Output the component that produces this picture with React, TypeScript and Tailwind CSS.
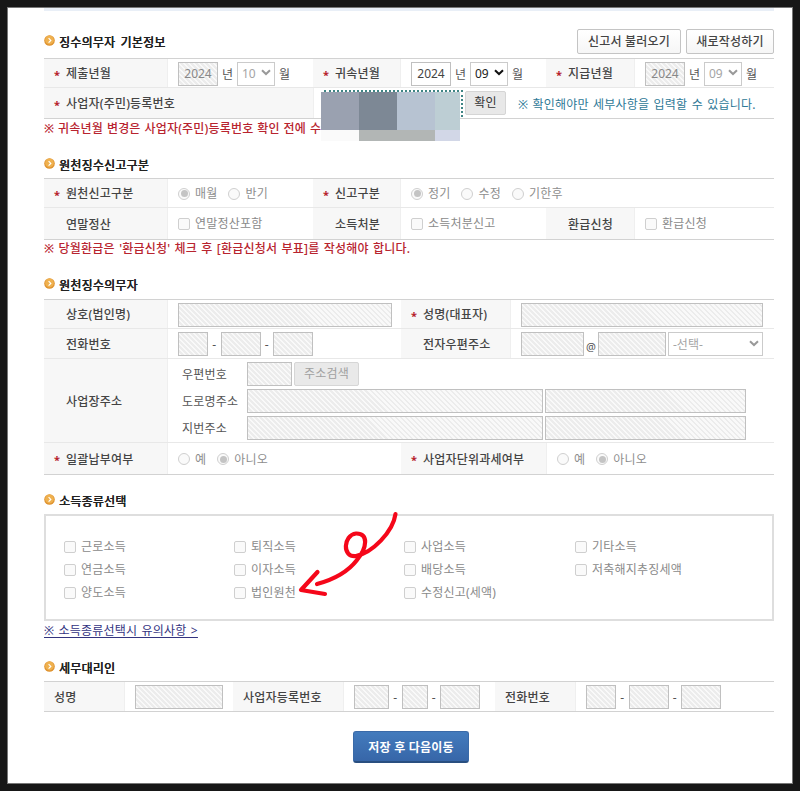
import type { ReactNode } from 'react'

interface CellProps {
  w: string
  children?: ReactNode
}

interface LabelProps extends CellProps {
  required?: boolean
  plain?: boolean
}

function Bullet() {
  return (
    <svg width="11" height="11" viewBox="0 0 11 11" className="mt-[-5px] shrink-0">
      <circle cx="5.5" cy="5.5" r="5.3" fill="#df9330" />
      <circle cx="5.5" cy="5" r="4.4" fill="#efb14f" />
      <path d="M4.6 3.2 L6.8 5.4 L4.6 7.6" fill="none" stroke="#fff" strokeWidth="1.2" />
    </svg>
  )
}

function Heading({ children }: { children: ReactNode }) {
  return (
    <h2 className="flex h-5 items-center gap-1 font-medium text-[#222]">
      <Bullet />
      <span className="[text-shadow:0.3px_0_0_#222]">{children}</span>
    </h2>
  )
}

function Table({ children }: { children: ReactNode }) {
  return <div className="border-t border-b border-[#d2d2d2] divide-y divide-[#e8e8e8]">{children}</div>
}

function Label({ w, required, plain, children }: LabelProps) {
  return (
    <div className={`flex shrink-0 items-center self-stretch border-r border-[#efefef] bg-[#f7f7f7] pl-[10px] pt-[2px] font-medium text-[#444] ${w}`}>
      {!plain && (
        <span className="w-3 shrink-0 text-[11px] font-bold leading-none text-[#b5202a]">{required ? '*' : ''}</span>
      )}
      {children}
    </div>
  )
}

function Cell({ w, children }: CellProps) {
  return <div className={`flex shrink-0 items-center pl-[10px] pt-px ${w}`}>{children}</div>
}

function Field({ w, value, enabled }: { w: string; value?: string; enabled?: boolean }) {
  const look = enabled
    ? 'bg-white text-[#444]'
    : 'bg-[#f8f8f8] bg-[repeating-linear-gradient(45deg,#f9f9f9_0_2px,#ececec_2px_3.54px)] text-[#888]'
  return (
    <span className={`flex h-6 shrink-0 items-center justify-center border border-[#c0c0c0] tracking-normal ${look} ${w}`}>
      {value}
    </span>
  )
}

function Select({ w, value, enabled }: { w: string; value: string; enabled?: boolean }) {
  return (
    <span
      className={`flex h-6 shrink-0 items-center justify-between border border-[#cbcbcb] bg-white pl-1 pr-[3px] tracking-normal ${enabled ? 'text-[#222]' : 'text-[#a5a5a5]'} ${w}`}
    >
      <span className="pt-px">{value}</span>
      <svg width="10" height="7" viewBox="0 0 10 7" className="mt-[-2px]">
        <path d="M1 1.2 L5 5 L9 1.2" fill="none" stroke={enabled ? '#111' : '#999'} strokeWidth="2" />
      </svg>
    </span>
  )
}

function YearMonth({ month, enabled = false }: { month: string; enabled?: boolean }) {
  return (
    <>
      <Field w="w-10" value="2024" enabled={enabled} />
      <span className="ml-[4px] w-[15px] pt-[2px] text-[#555]">년</span>
      <Select w="w-[38px]" value={month} enabled={enabled} />
      <span className="ml-[4px] pt-[2px] text-[#555]">월</span>
    </>
  )
}

function Radio({ checked, children }: { checked?: boolean; children: ReactNode }) {
  return (
    <span className="mr-[11px] flex items-center gap-[5px] text-[#8e8e8e]">
      <span className="flex size-3 items-center justify-center rounded-full border border-[#cfcfcf] bg-[#fafafa]">
        {checked && <span className="size-[7px] rounded-full bg-[#c4c4c4]" />}
      </span>
      <span className="pt-px">{children}</span>
    </span>
  )
}

function Check({ children }: { children: ReactNode }) {
  return (
    <span className="flex h-4 items-center gap-[5px] text-[#8a8a8a]">
      <span className="size-3 rounded-[2px] border border-[#cfcfcf] bg-[#fafafa]" />
      <span>{children}</span>
    </span>
  )
}

function Dash() {
  return <span className="w-[12.5px] shrink-0 pt-[2px] text-center tracking-normal text-[#555]">-</span>
}

function SmallButton({ w, children }: CellProps) {
  return (
    <button className={`h-[25px] rounded-[2px] border border-[#c4c4c4] bg-gradient-to-b from-white to-[#f6f6f6] pt-px font-medium text-[#444] ${w}`}>
      {children}
    </button>
  )
}

function AddressRow({ label, children }: { label: string; children: ReactNode }) {
  return (
    <div className="flex h-6 items-center gap-[2px]">
      <span className="w-[63px] pt-px">{label}</span>
      {children}
    </div>
  )
}

function Redaction() {
  return (
    <div className="absolute left-[7px] top-[2px] h-[50px] w-[142px]">
      <div className="absolute left-[3px] top-0 h-[27px] w-[139px] border-r-2 border-t-2 border-dotted border-[#3f8585]" />
      <div className="absolute left-0 top-[2px] grid grid-cols-[38px_38px_38px_25px] grid-rows-[38px_11px]">
        <div className="bg-[#9aa1b0]" />
        <div className="bg-[#7d8895]" />
        <div className="bg-[#b7c3d2]" />
        <div className="bg-[#bdced4]" />
        <div className="bg-[#fafafa]" />
        <div className="bg-[#b2b6b5]" />
        <div className="bg-[#b2b6b5]" />
        <div className="bg-[#d2d7e7]" />
      </div>
    </div>
  )
}

const incomeTypes = [
  '근로소득', '퇴직소득', '사업소득', '기타소득',
  '연금소득', '이자소득', '배당소득', '저축해지추징세액',
  '양도소득', '법인원천', '수정신고(세액)',
]

export default function App() {
  return (
    <div className="relative h-[791px] w-[800px] overflow-hidden bg-[#171717] p-[7px] font-['Noto_Sans','Noto_Sans_CJK_KR',sans-serif] text-[12px] leading-4 tracking-[0.2px] [word-spacing:1px] whitespace-nowrap">
      <main className="h-[777px] border border-[#777] bg-white pl-9 pr-[18px]">
        <div className="w-[730px]">
          <div className="h-[3px] bg-[#e9eff7]" />

          <div className="flex h-[47px] items-start justify-between pt-[18px]">
            <div className="pt-1 [word-spacing:2px]">
              <Heading>징수의무자 기본정보</Heading>
            </div>
            <div className="flex gap-[5px]">
              <SmallButton w="w-[104px]">신고서 불러오기</SmallButton>
              <SmallButton w="w-[88px]">새로작성하기</SmallButton>
            </div>
          </div>
          <Table>
            <div className="flex h-[29px]">
              <Label w="w-[124px]" required>제출년월</Label>
              <Cell w="w-[145px]"><YearMonth month="10" /></Cell>
              <Label w="w-[88px]" required>귀속년월</Label>
              <Cell w="w-[145px]"><YearMonth month="09" enabled /></Cell>
              <Label w="w-[89px]" required>지급년월</Label>
              <Cell w="w-[139px]"><YearMonth month="09" /></Cell>
            </div>
            <div className="flex h-[30px]">
              <Label w="w-[270px]" required>사업자(주민)등록번호</Label>
              <div className="relative flex items-center pl-[151px]">
                <Redaction />
                <span className="flex h-6 w-[41px] items-center justify-center rounded-[2px] border border-[#d5d5d5] bg-[#e8e8e8] text-[#333]">확인</span>
                <span className="ml-3 pt-[3px] text-[#2d7896]">※ 확인해야만 세부사항을 입력할 수 있습니다.</span>
              </div>
            </div>
          </Table>
          <p className="h-9 pt-[2px] font-medium text-[#b8242f] [word-spacing:0.5px]">※ 귀속년월 변경은 사업자(주민)등록번호 확인 전에 수</p>

          <div className="h-[23px] pt-px"><Heading>원천징수신고구분</Heading></div>
          <Table>
            <div className="flex h-[29px]">
              <Label w="w-[124px]" required>원천신고구분</Label>
              <Cell w="w-[145px]"><Radio checked>매월</Radio><Radio>반기</Radio></Cell>
              <Label w="w-[88px]" required>신고구분</Label>
              <Cell w="w-[373px]"><Radio checked>정기</Radio><Radio>수정</Radio><Radio>기한후</Radio></Cell>
            </div>
            <div className="flex h-[31px]">
              <Label w="w-[124px]">연말정산</Label>
              <Cell w="w-[145px]"><Check>연말정산포함</Check></Cell>
              <Label w="w-[88px]">소득처분</Label>
              <Cell w="w-[145px]"><Check>소득처분신고</Check></Cell>
              <Label w="w-[89px]">환급신청</Label>
              <Cell w="w-[139px]"><Check>환급신청</Check></Cell>
            </div>
          </Table>
          <p className="h-9 pt-px font-medium text-[#b8242f]">※ 당월환급은 '환급신청' 체크 후 [환급신청서 부표]를 작성해야 합니다.</p>

          <div className="h-[23px]"><Heading>원천징수의무자</Heading></div>
          <Table>
            <div className="flex h-[29px]">
              <Label w="w-[124px]">상호(법인명)</Label>
              <Cell w="w-[233px]"><Field w="w-[214px]" /></Cell>
              <Label w="w-[110px]" required>성명(대표자)</Label>
              <Cell w="w-[263px]"><Field w="w-[242px]" /></Cell>
            </div>
            <div className="flex h-[30px]">
              <Label w="w-[124px]">전화번호</Label>
              <Cell w="w-[233px]">
                <Field w="w-[30px]" /><Dash /><Field w="w-10" /><Dash /><Field w="w-10" />
              </Cell>
              <Label w="w-[110px]">전자우편주소</Label>
              <Cell w="w-[263px]">
                <Field w="w-[63px]" />
                <span className="w-[14px] pt-[6px] text-center text-[11px] tracking-normal text-[#555]">@</span>
                <Field w="w-[68px]" />
                <span className="w-[2px]" />
                <Select w="w-[95px]" value="-선택-" />
              </Cell>
            </div>
            <div className="flex h-[84px]">
              <Label w="w-[124px]">사업장주소</Label>
              <div className="flex flex-col gap-[3px] pl-[14px] pt-[3px] text-[#555]">
                <AddressRow label="우편번호">
                  <Field w="w-[45px]" />
                  <span className="flex h-6 w-[65px] items-center justify-center rounded-[2px] border border-[#d6d6d6] bg-[#e9e9e9] text-[#a0a0a0]">주소검색</span>
                </AddressRow>
                <AddressRow label="도로명주소">
                  <Field w="w-[296px]" />
                  <Field w="w-[201px]" />
                </AddressRow>
                <AddressRow label="지번주소">
                  <Field w="w-[296px]" />
                  <Field w="w-[201px]" />
                </AddressRow>
              </div>
            </div>
            <div className="flex h-[31px]">
              <Label w="w-[124px]" required>일괄납부여부</Label>
              <Cell w="w-[233px]"><Radio>예</Radio><Radio checked>아니오</Radio></Cell>
              <Label w="w-[146px]" required>사업자단위과세여부</Label>
              <Cell w="w-[227px]"><Radio>예</Radio><Radio checked>아니오</Radio></Cell>
            </div>
          </Table>

          <div className="h-[39px] pt-[17px]"><Heading>소득종류선택</Heading></div>
          <div className="grid h-[107px] grid-cols-[170px_170px_171px_1fr] content-start gap-y-[7px] border-2 border-[#dedede] pl-[18px] pt-[23px]">
            {incomeTypes.map(t => (
              <Check key={t}>{t}</Check>
            ))}
          </div>
          <p className="h-9 pt-[2px] text-[#33337f]">
            <a className="underline underline-offset-2">※ 소득종류선택시 유의사항 &gt;</a>
          </p>

          <div className="h-6 pt-[2px]"><Heading>세무대리인</Heading></div>
          <Table>
            <div className="flex h-[29px]">
              <Label w="w-[81px]" plain>성명</Label>
              <Cell w="w-[108px]"><Field w="w-[88px]" /></Cell>
              <Label w="w-[111px]" plain>사업자등록번호</Label>
              <Cell w="w-[151px]">
                <Field w="w-[35px]" /><Dash /><Field w="w-[26px]" /><Dash /><Field w="w-10" />
              </Cell>
              <Label w="w-[81px]" plain>전화번호</Label>
              <Cell w="w-[198px]">
                <Field w="w-[30px]" /><Dash /><Field w="w-10" /><Dash /><Field w="w-10" />
              </Cell>
            </div>
          </Table>

          <div className="pl-[309px] pt-[19px]">
            <button className="h-8 w-[116px] rounded-[3px] border border-b-2 border-[#3a6aa8] border-b-[#294f80] bg-gradient-to-b from-[#437bbd] to-[#3766a8] pt-[2px] font-bold text-white">
              저장 후 다음이동
            </button>
          </div>
        </div>
      </main>

      {/* hand-drawn arrow over the income types */}
      <svg className="pointer-events-none absolute left-[290px] top-[505px]" width="120" height="100" viewBox="0 0 120 100">
        <g fill="none" stroke="#f5071a" strokeWidth="4.2" strokeLinecap="round" strokeLinejoin="round">
          <path d="M105.500 9 C103 27 82 48 66 51 C52 53 53 30 66 28.500 C79 28 77 43 67 55 C57 68 42 75 27 79" />
          <path d="M27.500 67 L11 85 L35 89" />
        </g>
      </svg>
    </div>
  )
}
